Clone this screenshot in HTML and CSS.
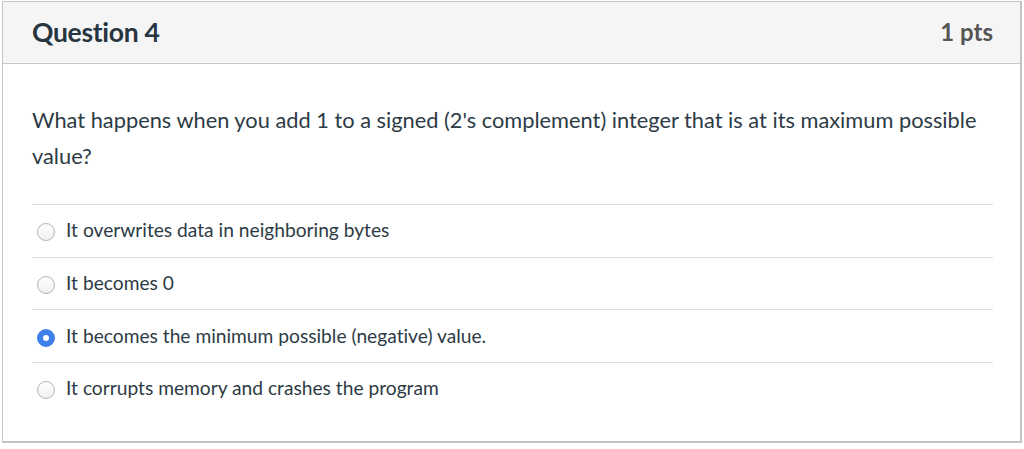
FILE: index.html
```html
<!DOCTYPE html>
<html>
<head>
<meta charset="utf-8">
<link rel="stylesheet" href="styles.css">
</head>
<body>
<div class="question">
  <div class="header">
    <span class="title">Question 4</span>
    <span class="pts">1 pts</span>
  </div>
  <div class="content">
    <p class="text">What happens when you add 1 to a signed (2's complement) integer that is at its maximum possible value?</p>
    <div class="answers">
      <label class="answer"><span class="radio"></span><span class="label">It overwrites data in neighboring bytes</span></label>
      <label class="answer"><span class="radio"></span><span class="label">It becomes 0</span></label>
      <label class="answer"><span class="radio checked"></span><span class="label">It becomes the minimum possible (negative) value.</span></label>
      <label class="answer"><span class="radio"></span><span class="label">It corrupts memory and crashes the program</span></label>
    </div>
  </div>
</div>
</body>
</html>
```

FILE: styles.css
```css
* { box-sizing: border-box; }
html, body { margin: 0; padding: 0; background: #fff; }
body {
  font-family: Lato, "Liberation Sans", sans-serif;
  color: #2d3b45;
  padding: 1px 3px 0 2px;
  font-variant-ligatures: no-common-ligatures;
}
.question {
  border: 1px solid #c4c4c4;
  border-width: 1px 2px 2px 1px;
  height: 442px;
  width: 1020px;
}
.header {
  display: flex;
  justify-content: space-between;
  align-items: center;
  height: 62px;
  background: #f5f5f5;
  border-bottom: 1px solid #c7c7c7;
  padding: 0 27px 2px 29px;
}
.title {
  font-size: 26.5px;
  font-weight: 700;
  color: #273540;
  letter-spacing: -0.3px;
}
.pts {
  font-size: 24px;
  font-weight: 700;
  color: #555;
}
.content {
  padding: 0 27px 0 29px;
}
.text {
  margin: 38px 0 0 0;
  font-size: 21.8px;
  line-height: 36px;
}
.answers {
  margin-top: 30px;
}
.answer {
  display: flex;
  align-items: center;
  height: 52.7px;
  border-top: 1px solid #dcdcdc;
  font-size: 19.2px;
  padding-bottom: 2px;
}
.radio {
  width: 18px;
  height: 18px;
  border-radius: 50%;
  border: 1px solid #b4b4b4;
  background: linear-gradient(#fff, #f0f0f0);
  margin: 5px 11px 0 5px;
  flex: none;
}
.radio.checked {
  border: 6px solid #3f80ea;
  background: #fff;
}
```
